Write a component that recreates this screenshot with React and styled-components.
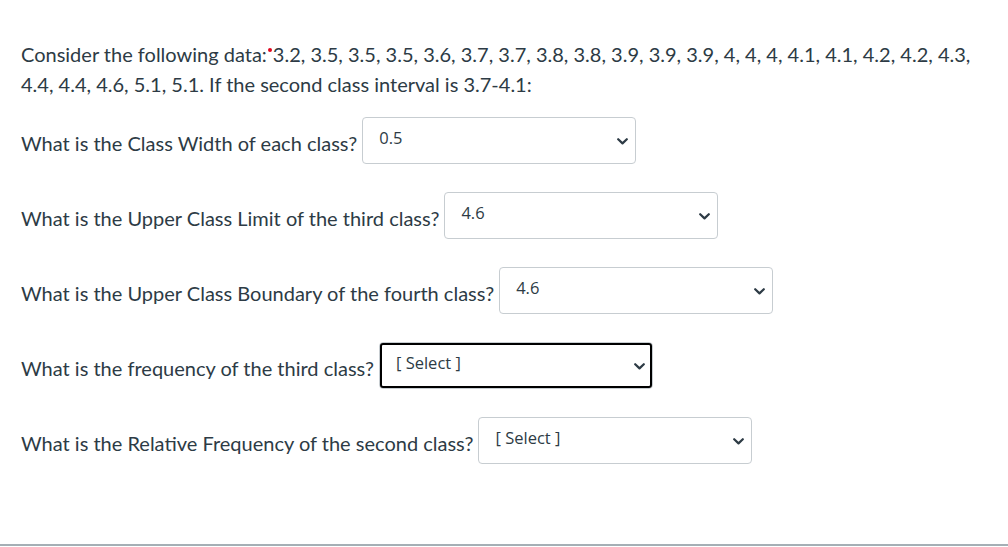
import React from "react";
import styled, { createGlobalStyle } from "styled-components";

const GlobalStyle = createGlobalStyle`
  html, body {
    margin: 0;
    padding: 0;
    background: #fff;
  }
  body {
    font-family: Lato, "Open Sans", sans-serif;
    color: #2d3b45;
  }
`;

const questions = [
  { label: "What is the Class Width of each class?", value: "0.5" },
  { label: "What is the Upper Class Limit of the third class?", value: "4.6" },
  { label: "What is the Upper Class Boundary of the fourth class?", value: "4.6" },
  { label: "What is the frequency of the third class?", value: "[ Select ]", focused: true },
  { label: "What is the Relative Frequency of the second class?", value: "[ Select ]" },
];

function Chevron() {
  return (
    <svg width="11" height="7" viewBox="0 0 11 7">
      <polyline
        points="1.2,1.2 5.5,5.4 9.8,1.2"
        fill="none"
        stroke="#2d3b45"
        strokeWidth="2.2"
        strokeLinecap="round"
        strokeLinejoin="round"
      />
    </svg>
  );
}

function App() {
  return (
    <Page>
      <GlobalStyle />
      <Content>
        <Intro>
          Consider the following data:<Dot />3.2, 3.5, 3.5, 3.5, 3.6, 3.7, 3.7, 3.8, 3.8, 3.9, 3.9, 3.9, 4, 4, 4, 4.1, 4.1, 4.2, 4.2, 4.3,
          4.4, 4.4, 4.6, 5.1, 5.1. If the second class interval is 3.7-4.1:
        </Intro>

        {questions.map((q) => (
          <Question key={q.label}>
            <Label>{q.label}</Label>
            <Dropdown $focused={q.focused}>
              <Value>{q.value}</Value>
              <Arrow>
                <Chevron />
              </Arrow>
            </Dropdown>
          </Question>
        ))}
      </Content>
      <Footer />
    </Page>
  );
}

export default App;

const Page = styled.div`
  width: 1008px;
  height: 547px;
  display: flex;
  flex-direction: column;
  justify-content: space-between;
  overflow: hidden;
`;

const Content = styled.div`
  padding: 39px 0 0 21px;
  display: flex;
  flex-direction: column;
  gap: 28px;
`;

const Intro = styled.p`
  margin: 0 0 -10px;
  font-size: 20px;
  line-height: 30px;
  width: 978px;
`;

const Dot = styled.span`
  display: inline-block;
  width: 4px;
  height: 4px;
  border-radius: 50%;
  background: #e0061f;
  margin: 0 1px 0 1px;
  position: relative;
  top: -10px;
`;

const Question = styled.div`
  display: flex;
  align-items: center;
  gap: 5px;
`;

const Label = styled.span`
  font-size: 20px;
  margin-top: 5px;
  white-space: nowrap;
`;

const Dropdown = styled.div`
  position: relative;
  box-sizing: border-box;
  width: 274px;
  height: 47px;
  border: 1px solid #c7cdd1;
  border-radius: 4px;
  background: #fff;
  display: flex;
  align-items: flex-start;
  padding: 9px 0 0 16px;
  ${(p) =>
    p.$focused &&
    `
    outline: 2px solid #000;
    outline-offset: -3px;
  `}
`;

const Value = styled.span`
  font-family: "Open Sans", "Noto Sans", sans-serif;
  font-size: 16.5px;
  line-height: 22px;
  color: #2d3b45;
`;

const Arrow = styled.span`
  position: absolute;
  right: 7px;
  top: 20px;
  display: flex;
`;

const Footer = styled.div`
  height: 1px;
  border-top: 2px solid #a5afb5;
`;
